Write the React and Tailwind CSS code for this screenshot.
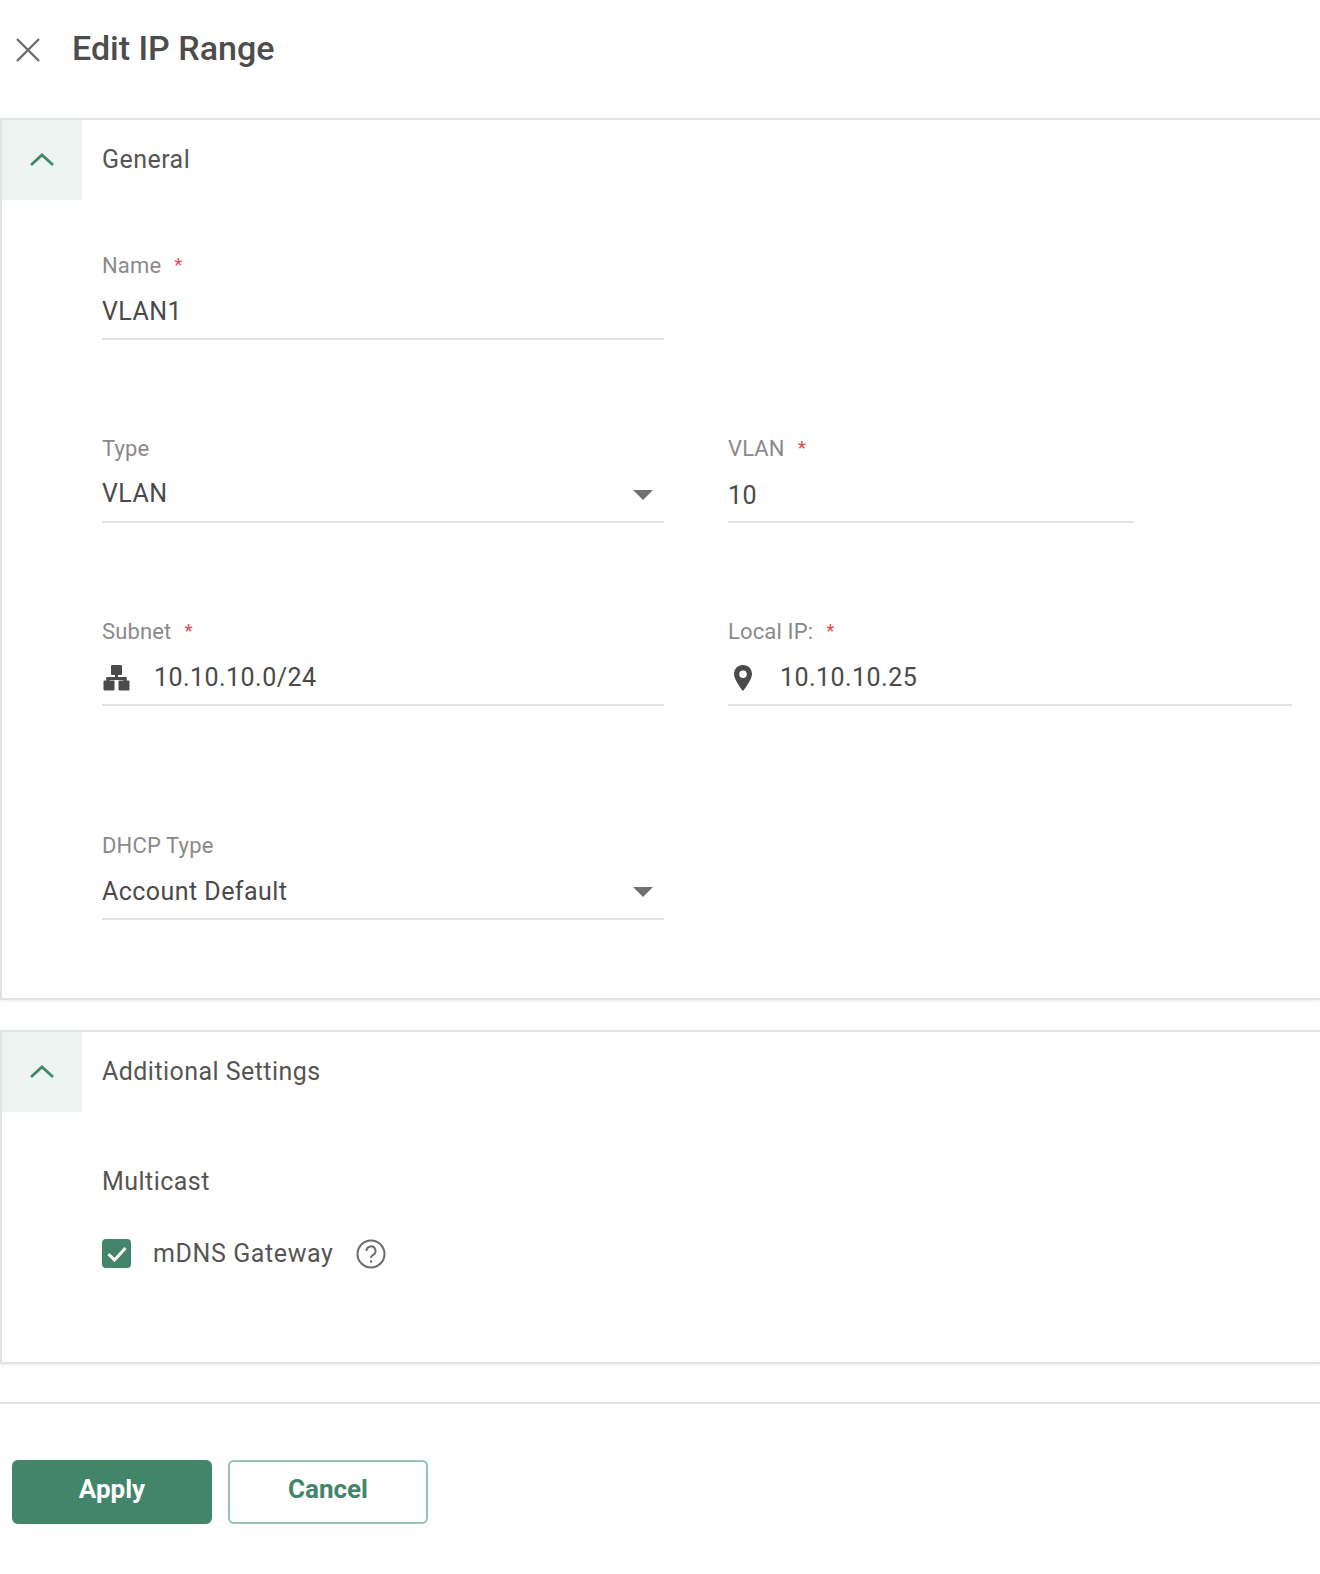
import React from "react";

const Chevron = () => (
  <svg width="24" height="24" viewBox="0 0 24 24" fill="none" stroke="#3f8a66" strokeWidth="2.8">
    <path d="M1 17 L12 7 L23 17" />
  </svg>
);

const Caret = () => (
  <svg width="20" height="10" viewBox="0 0 20 10" className="absolute right-[11px] bottom-[23px]">
    <path d="M0 0 H20 L10 10 Z" fill="#707070" />
  </svg>
);

const Star = () => <span className="text-[#e5484d] text-[19px] leading-none ml-[13px] relative -top-[2px]">*</span>;

function Field({ label, required, value, icon, caret, className, valueClass = "pb-[11px]" }) {
  return (
    <div className={`relative ${className}`}>
      <div className="flex items-center h-[22px] text-[22px] leading-[22px] tracking-[0.15px] text-[#8a8a8a]">
        {label}
        {required && <Star />}
      </div>
      <div className={`flex items-end h-[63px] border-b-2 border-[#e3e3e3] text-[25px] leading-[30px] tracking-[0.45px] text-[#4a4a4a] ${valueClass}`}>
        {icon && <span className="w-[52px] h-[30px] flex items-center shrink-0">{icon}</span>}
        {value}
      </div>
      {caret && <Caret />}
    </div>
  );
}

const SubnetIcon = (
  <svg width="29" height="26" viewBox="0 0 28 26" fill="#4a4a4a">
    <rect x="8.5" y="0" width="11" height="10" rx="1" />
    <rect x="12.5" y="9" width="3" height="5" />
    <rect x="4" y="12" width="20" height="3" />
    <rect x="4" y="12" width="3" height="5" />
    <rect x="21" y="12" width="3" height="5" />
    <rect x="1" y="15.5" width="11" height="10" rx="1" />
    <rect x="16" y="15.5" width="11" height="10" rx="1" />
  </svg>
);

const PinIcon = (
  <svg width="30" height="26" viewBox="0 0 30 26" fill="#4a4a4a">
    <path
      fillRule="evenodd"
      d="M15 0 C9.7 0 6 3.9 6 9 C6 15 15 26 15 26 C15 26 24 15 24 9 C24 3.9 20.3 0 15 0 Z M15 5.5 A3.8 3.8 0 1 1 15 13.1 A3.8 3.8 0 1 1 15 5.5 Z"
    />
  </svg>
);

function Section({ title, className, children }) {
  return (
    <section className={`border-2 border-r-0 border-[#e3e3e3] shadow-[0_1px_3px_rgba(0,0,0,0.08)] ${className}`}>
      <div className="flex h-[80px]">
        <div className="w-[80px] bg-[#edf4f1] flex items-center justify-center">
          <Chevron />
        </div>
        <div className="ml-5 pt-[25px] text-[25px] leading-[30px] tracking-[0.45px] text-[#555]">{title}</div>
      </div>
      {children}
    </section>
  );
}

export default function App() {
  return (
    <div className="w-[1320px] h-[1574px] bg-white overflow-hidden" style={{ fontFamily: "Roboto, sans-serif" }}>
      <header className="flex items-center h-[118px] pb-[20px]">
        <svg width="26" height="26" viewBox="0 0 26 26" stroke="#6b6b6b" strokeWidth="2.4" className="ml-[15px] mt-[1px]">
          <path d="M2 2 L24 24 M24 2 L2 24" />
        </svg>
        <h1 className="ml-[31px] -mt-[2px] text-[34px] font-medium text-[#4d4d4d]">Edit IP Range</h1>
      </header>

      <Section title="General" className="h-[882px]">
        <div className="pl-[100px] pt-[55px] flex flex-col">
          <Field label="Name" required value="VLAN1" className="w-[562px]" />
          <div className="flex mt-[98px]">
            <Field label="Type" value="VLAN" caret valueClass="pb-[12px]" className="w-[562px]" />
            <Field label="VLAN" required value="10" valueClass="pb-[10px]" className="w-[406px] ml-[64px]" />
          </div>
          <div className="flex mt-[98px]">
            <Field label="Subnet" required value="10.10.10.0/24" icon={SubnetIcon} className="w-[562px]" />
            <Field label="Local IP:" required value="10.10.10.25" icon={PinIcon} className="w-[564px] ml-[64px]" />
          </div>
          <Field label="DHCP Type" value="Account Default" caret valueClass="pb-[11px]" className="w-[562px] mt-[129px]" />
        </div>
      </Section>

      <Section title="Additional Settings" className="h-[334px] mt-[30px]">
        <div className="pl-[100px] pt-[55px]">
          <div className="text-[25px] leading-[30px] tracking-[0.45px] text-[#555]">Multicast</div>
          <div className="flex items-center mt-[38px]">
            <span className="w-[29px] h-[29px] rounded-[4px] bg-[#43856a] flex items-center justify-center">
              <svg width="20" height="16" viewBox="0 0 20 16" fill="none" stroke="#fff" strokeWidth="3">
                <path d="M1.5 8 L7.5 14 L18.5 2" />
              </svg>
            </span>
            <span className="ml-[22px] text-[25px] tracking-[0.6px] text-[#555]">mDNS Gateway</span>
            <svg width="30" height="30" viewBox="0 0 30 30" fill="none" stroke="#6b6b6b" strokeWidth="2" className="ml-[22px]">
              <circle cx="15" cy="15" r="13.5" />
              <path d="M10.5 12 A4.5 4.5 0 1 1 16.8 16 C15.5 16.8 15 17.5 15 19" />
              <circle cx="15" cy="22.5" r="1.2" fill="#6b6b6b" stroke="none" />
            </svg>
          </div>
        </div>
      </Section>

      <div className="mt-[38px] border-t-2 border-[#e3e3e3] pt-[56px] pl-[12px] flex gap-[16px]">
        <button className="w-[200px] h-[64px] pb-[6px] rounded-[6px] bg-[#43856a] text-white text-[26px] font-bold">Apply</button>
        <button className="w-[200px] h-[64px] pb-[6px] rounded-[6px] border-2 border-[#93c3ae] text-[#43856a] text-[26px] font-bold">Cancel</button>
      </div>
    </div>
  );
}
